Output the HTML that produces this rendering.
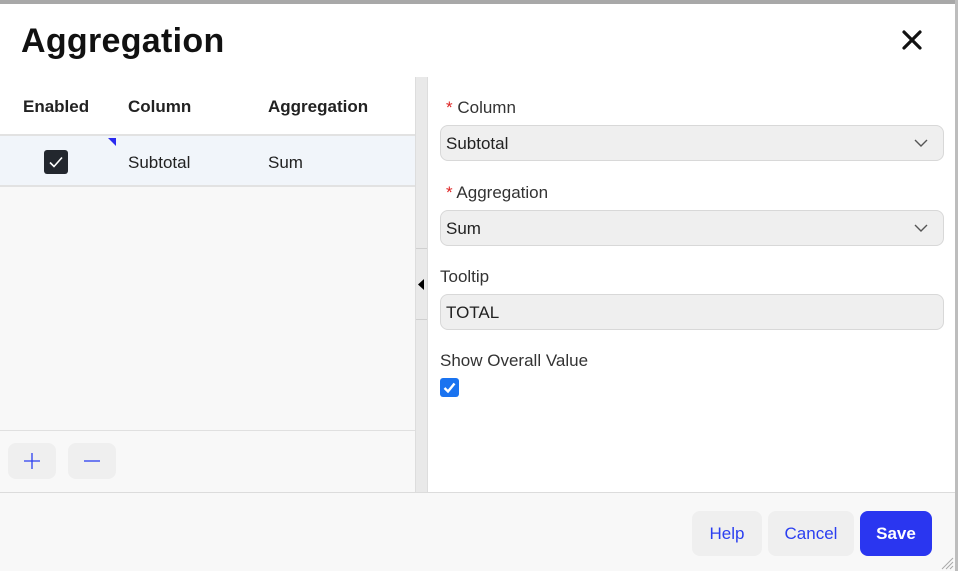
<!DOCTYPE html>
<html><head><style>
*{box-sizing:border-box;margin:0;padding:0}
body{width:958px;height:571px;overflow:hidden;background:#fff;font-family:"Liberation Sans",sans-serif;position:relative;color:#222}
.abs{position:absolute}
.top{left:0;top:0;width:958px;height:4px;background:#a8a8a8}
h1{position:absolute;left:21px;top:22px;font-size:34px;font-weight:bold;color:#111;letter-spacing:0.3px}
.lbl{font-size:17px;color:#333}
.inp{position:absolute;left:440px;width:504px;height:36px;background:#efefef;border:1px solid #d8d8d8;border-radius:8px;font-size:17px;padding:8px 5px;color:#222}
.chev{position:absolute;right:14px;top:11px}
.btn{position:absolute;border-radius:8px;font-size:17px;text-align:center;line-height:45px;height:45px;top:511px}
</style></head><body>
<div class="abs top"></div>
<h1>Aggregation</h1>
<svg class="abs" style="left:901px;top:29px" width="22" height="22" viewBox="0 0 22 22"><path d="M3 3L19 19M19 3L3 19" stroke="#111" stroke-width="3.2" stroke-linecap="round"/></svg>

<div class="abs" style="left:0;top:186px;width:415px;height:306px;background:#f8f8f8"></div>
<div class="abs" style="left:0;top:134px;width:415px;height:2px;background:#e2e2e2"></div>
<div class="abs" style="left:0;top:136px;width:415px;height:49px;background:#f1f5fa"></div>
<div class="abs" style="left:0;top:185px;width:415px;height:2px;background:#e2e2e2"></div>
<div class="abs" style="left:23px;top:97px;font-size:17px;font-weight:bold;color:#222">Enabled</div>
<div class="abs" style="left:128px;top:97px;font-size:17px;font-weight:bold;color:#222">Column</div>
<div class="abs" style="left:268px;top:97px;font-size:17px;font-weight:bold;color:#222">Aggregation</div>
<div class="abs" style="left:44px;top:150px;width:24px;height:24px;background:#23272e;border-radius:3px"></div>
<svg class="abs" style="left:44px;top:150px" width="24" height="24"><path d="M6 12.5l4 4 8-9" stroke="#fff" stroke-width="1.6" fill="none"/></svg>
<svg class="abs" style="left:108px;top:138px" width="8" height="8"><path d="M0 0H8V8Z" fill="#2a2af0"/></svg>
<div class="abs" style="left:128px;top:153px;font-size:17px;color:#222">Subtotal</div>
<div class="abs" style="left:268px;top:153px;font-size:17px;color:#222">Sum</div>
<div class="abs" style="left:0;top:430px;width:415px;height:1px;background:#e0e0e0"></div>
<div class="abs" style="left:8px;top:443px;width:48px;height:36px;background:#efefef;border-radius:8px"></div>
<svg class="abs" style="left:24px;top:453px" width="16" height="16"><path d="M8 0V16M0 8H16" stroke="#2a3ef0" stroke-width="1.3"/></svg>
<div class="abs" style="left:68px;top:443px;width:48px;height:36px;background:#efefef;border-radius:8px"></div>
<svg class="abs" style="left:84px;top:453px" width="16" height="16"><path d="M0 8H16" stroke="#2a3ef0" stroke-width="1.3"/></svg>

<div class="abs" style="left:415px;top:77px;width:13px;height:415px;background:#e9e9e9;border-left:1px solid #ddd;border-right:1px solid #ddd"></div>
<div class="abs" style="left:416px;top:248px;width:11px;height:1px;background:#d0d0d0"></div>
<div class="abs" style="left:416px;top:319px;width:11px;height:1px;background:#d0d0d0"></div>
<svg class="abs" style="left:418px;top:279px" width="7" height="11"><path d="M6 0V11L0 5.5Z" fill="#000"/></svg>

<div class="abs lbl" style="left:446px;top:98px"><span style="color:#d22">*</span> Column</div>
<div class="inp" style="top:125px">Subtotal<svg class="chev" width="16" height="12"><path d="M2 3l6 6 6-6" stroke="#555" stroke-width="1.4" fill="none"/></svg></div>
<div class="abs lbl" style="left:446px;top:183px"><span style="color:#d22">*</span> Aggregation</div>
<div class="inp" style="top:210px">Sum<svg class="chev" width="16" height="12"><path d="M2 3l6 6 6-6" stroke="#555" stroke-width="1.4" fill="none"/></svg></div>
<div class="abs lbl" style="left:440px;top:267px">Tooltip</div>
<div class="inp" style="top:294px">TOTAL</div>
<div class="abs lbl" style="left:440px;top:351px">Show Overall Value</div>
<div class="abs" style="left:440px;top:378px;width:19px;height:19px;background:#1a73f0;border-radius:3px"></div>
<svg class="abs" style="left:440px;top:378px" width="19" height="19"><path d="M4.5 10l3.5 3.5 6.5-8" stroke="#fff" stroke-width="2.4" fill="none"/></svg>

<div class="abs" style="left:0;top:492px;width:958px;height:79px;background:#f8f8f8;border-top:1px solid #dcdcdc"></div>
<div class="btn" style="left:692px;width:70px;background:#efefef;color:#2a3ef0">Help</div>
<div class="btn" style="left:768px;width:86px;background:#efefef;color:#2a3ef0">Cancel</div>
<div class="btn" style="left:860px;width:72px;background:#2a36f0;color:#fff;font-weight:bold">Save</div>
<svg class="abs" style="left:940px;top:556px" width="14" height="14"><path d="M13 2L2 13M13 6L6 13M13 10L10 13" stroke="#aaa" stroke-width="1"/></svg>
<div class="abs" style="left:955px;top:0;width:3px;height:571px;background:#bdbdbd"></div>
</body></html>
